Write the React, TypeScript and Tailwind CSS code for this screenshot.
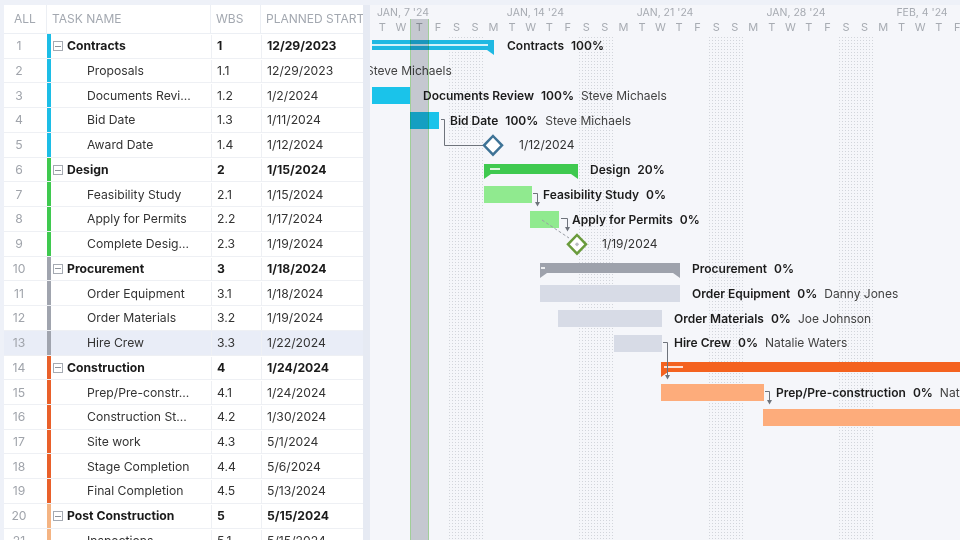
import React from 'react'

// page geometry, measured off the screenshot
const ROW_H = 24.74
const HEAD_H = 29
const G_LEFT = 370 // page x where the gantt pane starts
const G_TOP = 5
const COL0 = 373
const DAY = 18.55

const rowCenter = (i: number) => G_TOP + HEAD_H + ROW_H * (i - 0.5)

type Row = { n: number; name: string; wbs: string; start: string; group?: boolean; color: string }

const CYAN = '#1cbde6'
const GREEN = '#3fc94f'
const GREY = '#a0a4ae'
const ORANGE = '#e9602a'
const PEACH = '#f4b483'

const rows: Row[] = [
  { n: 1, name: 'Contracts', wbs: '1', start: '12/29/2023', group: true, color: CYAN },
  { n: 2, name: 'Proposals', wbs: '1.1', start: '12/29/2023', color: CYAN },
  { n: 3, name: 'Documents Revi...', wbs: '1.2', start: '1/2/2024', color: CYAN },
  { n: 4, name: 'Bid Date', wbs: '1.3', start: '1/11/2024', color: CYAN },
  { n: 5, name: 'Award Date', wbs: '1.4', start: '1/12/2024', color: CYAN },
  { n: 6, name: 'Design', wbs: '2', start: '1/15/2024', group: true, color: GREEN },
  { n: 7, name: 'Feasibility Study', wbs: '2.1', start: '1/15/2024', color: GREEN },
  { n: 8, name: 'Apply for Permits', wbs: '2.2', start: '1/17/2024', color: GREEN },
  { n: 9, name: 'Complete Desig...', wbs: '2.3', start: '1/19/2024', color: GREEN },
  { n: 10, name: 'Procurement', wbs: '3', start: '1/18/2024', group: true, color: GREY },
  { n: 11, name: 'Order Equipment', wbs: '3.1', start: '1/18/2024', color: GREY },
  { n: 12, name: 'Order Materials', wbs: '3.2', start: '1/19/2024', color: GREY },
  { n: 13, name: 'Hire Crew', wbs: '3.3', start: '1/22/2024', color: GREY },
  { n: 14, name: 'Construction', wbs: '4', start: '1/24/2024', group: true, color: ORANGE },
  { n: 15, name: 'Prep/Pre-constr...', wbs: '4.1', start: '1/24/2024', color: ORANGE },
  { n: 16, name: 'Construction St...', wbs: '4.2', start: '1/30/2024', color: ORANGE },
  { n: 17, name: 'Site work', wbs: '4.3', start: '5/1/2024', color: ORANGE },
  { n: 18, name: 'Stage Completion', wbs: '4.4', start: '5/6/2024', color: ORANGE },
  { n: 19, name: 'Final Completion', wbs: '4.5', start: '5/13/2024', color: ORANGE },
  { n: 20, name: 'Post Construction', wbs: '5', start: '5/15/2024', group: true, color: PEACH },
  { n: 21, name: 'Inspections', wbs: '5.1', start: '5/15/2024', color: PEACH },
]

const SELECTED = 13

const taskBars = [
  { row: 3, x1: 372, x2: 410, color: '#1ac3ea' },
  { row: 4, x1: 410, x2: 439, color: '#1ac3ea' },
  { row: 7, x1: 484, x2: 532, color: '#90ea8f' },
  { row: 8, x1: 530, x2: 559, color: '#90ea8f' },
  { row: 11, x1: 540, x2: 680, color: '#d7dbe6' },
  { row: 12, x1: 558, x2: 662, color: '#d7dbe6' },
  { row: 13, x1: 614, x2: 662, color: '#d7dbe6' },
  { row: 15, x1: 661, x2: 764, color: '#fdac7b' },
  { row: 16, x1: 763, x2: 970, color: '#fdac7b' },
]

const summaryBars = [
  { row: 1, x1: 372, x2: 494, color: '#1fb8e2', left: false, right: true, l1: 372, l2: 488 },
  { row: 6, x1: 484, x2: 578, color: GREEN, left: true, right: true, l1: 490, l2: 500 },
  { row: 10, x1: 540, x2: 680, color: '#9ea2ac', left: true, right: true, l1: 541, l2: 545 },
  { row: 14, x1: 661, x2: 970, color: '#f4621f', left: true, right: false, l1: 664, l2: 683 },
]

type Label = { row: number; x: number; name?: string; pct?: string; who?: string; plain?: string }

const labels: Label[] = [
  { row: 1, x: 507, name: 'Contracts', pct: '100%' },
  { row: 2, x: 366, who: 'Steve Michaels' },
  { row: 3, x: 423, name: 'Documents Review', pct: '100%', who: 'Steve Michaels' },
  { row: 4, x: 450, name: 'Bid Date', pct: '100%', who: 'Steve Michaels' },
  { row: 5, x: 519, plain: '1/12/2024' },
  { row: 6, x: 590, name: 'Design', pct: '20%' },
  { row: 7, x: 543, name: 'Feasibility Study', pct: '0%' },
  { row: 8, x: 572, name: 'Apply for Permits', pct: '0%' },
  { row: 9, x: 602, plain: '1/19/2024' },
  { row: 10, x: 692, name: 'Procurement', pct: '0%' },
  { row: 11, x: 692, name: 'Order Equipment', pct: '0%', who: 'Danny Jones' },
  { row: 12, x: 674, name: 'Order Materials', pct: '0%', who: 'Joe Johnson' },
  { row: 13, x: 674, name: 'Hire Crew', pct: '0%', who: 'Natalie Waters' },
  { row: 15, x: 776, name: 'Prep/Pre-construction', pct: '0%', who: 'Natalie Waters' },
]

const DAYS = ['T', 'W', 'T', 'F', 'S', 'S', 'M']
const MONTHS = ["JAN, 7 '24", "JAN, 14 '24", "JAN, 21 '24", "JAN, 28 '24", "FEB, 4 '24"]

function CollapseIcon() {
  return (
    <span className="w-[10px] h-[10px] border border-[#a5aab2] flex items-center justify-center shrink-0">
      <span className="w-[6px] h-px bg-[#8d939b]" />
    </span>
  )
}

function TaskTable() {
  return (
    <div className="w-[359px] shrink-0 bg-white flex flex-col overflow-hidden">
      <div className="h-[29px] shrink-0 flex items-center text-[12px] text-[#a3a8b0] border-b border-[#eceff4] whitespace-nowrap">
        <div className="w-[43px] h-full flex items-center pl-[10px] border-r border-[#eceff4]">ALL</div>
        <div className="w-[164px] h-full flex items-center pl-[5px] border-r border-[#eceff4]">TASK NAME</div>
        <div className="w-[50px] h-full flex items-center pl-[5px] border-r border-[#eceff4]">WBS</div>
        <div className="flex-1 h-full flex items-center pl-[5px] overflow-hidden">PLANNED START</div>
      </div>
      {rows.map((r) => (
        <div
          key={r.n}
          className={
            'h-[24.74px] shrink-0 flex items-stretch pt-px text-[12.2px] border-b border-[#eef0f4] whitespace-nowrap ' +
            (r.n === SELECTED ? 'bg-[#e9edf7]' : 'bg-white')
          }
        >
          <div className="w-[43px] pr-[13px] flex items-center justify-center text-[#a0a4ab]">{r.n}</div>
          <div className="w-[4px] -mt-px" style={{ backgroundColor: r.color }} />
          {r.group ? (
            <div className="w-[160px] flex items-center gap-[4px] pl-[2px] font-bold text-[#1a1a1a]">
              <CollapseIcon />
              <span>{r.name}</span>
            </div>
          ) : (
            <div className="w-[160px] flex items-center pl-[36px] text-[#333]">{r.name}</div>
          )}
          <div className={'w-[50px] flex items-center pl-[5px] border-l border-[#eef0f4] ' + (r.group ? 'font-bold text-[#1a1a1a]' : 'text-[#333]')}>
            {r.wbs}
          </div>
          <div className={'flex-1 flex items-center pl-[5px] border-l border-[#eef0f4] ' + (r.group ? 'font-bold text-[#1a1a1a]' : 'text-[#333]')}>
            {r.start}
          </div>
        </div>
      ))}
    </div>
  )
}

function Gantt() {
  const cols = Array.from({ length: 32 }, (_, i) => i)
  const todayX = COL0 + 2 * DAY
  return (
    <div className="relative flex-1 bg-[#f5f6fa] overflow-hidden">
      {/* weekend columns */}
      {cols
        .filter((i) => i % 7 === 4)
        .map((i) => (
          <div
            key={'we' + i}
            className="absolute bottom-0 bg-[linear-gradient(90deg,#f5f6fa_2px,transparent_2px),linear-gradient(#f5f6fa_2px,#d2d5db_2px)] bg-size-[3px_3px]"
            style={{ left: COL0 + i * DAY - G_LEFT, width: DAY * 2, top: HEAD_H + 1 }}
          />
        ))}

      {/* timescale */}
      <div className="absolute left-0 top-0 right-0 h-[29px] text-[#a7abb2] whitespace-nowrap">
        {MONTHS.map((m, i) => (
          <span
            key={m}
            className="absolute top-[1px] text-[10.5px] leading-[14px]"
            style={{ left: COL0 + i * 7 * DAY - G_LEFT + 4 }}
          >
            {m}
          </span>
        ))}
        {cols.map((i) => (
          <span
            key={'d' + i}
            className="absolute top-[15px] text-[11px] leading-[14px] text-center"
            style={{ left: COL0 + i * DAY - G_LEFT, width: DAY }}
          >
            {DAYS[i % 7]}
          </span>
        ))}
      </div>

      {/* task bars */}
      {taskBars.map((b) => (
        <div
          key={'tb' + b.row}
          className="absolute h-[17px]"
          style={{
            left: b.x1 - G_LEFT,
            width: b.x2 - b.x1,
            top: rowCenter(b.row) - 8.5 - G_TOP,
            backgroundColor: b.color,
          }}
        />
      ))}

      {/* summary bars */}
      {summaryBars.map((b) => {
        const w = b.x2 - b.x1
        return (
          <svg
            key={'sb' + b.row}
            className="absolute"
            width={w}
            height={16}
            style={{ left: b.x1 - G_LEFT, top: rowCenter(b.row) - 6 - G_TOP }}
          >
            <rect x={0} y={0} width={w} height={10} fill={b.color} />
            {b.left && <polygon points="0,10 7,10 0,15" fill={b.color} />}
            {b.right && <polygon points={`${w},10 ${w - 7},10 ${w},15`} fill={b.color} />}
            <rect x={b.l1 - b.x1} y={4.2} width={b.l2 - b.l1} height={1.6} fill="#ffffff" />
          </svg>
        )
      })}

      {/* links and milestones */}
      <svg
        className="absolute left-0 top-0"
        width={960 - G_LEFT}
        height={540 - G_TOP}
        viewBox={`${G_LEFT} ${G_TOP} ${960 - G_LEFT} ${540 - G_TOP}`}
      >
        <g stroke="#6e737b" strokeWidth={1} fill="none">
          <path d="M441 119.5 H444.5 V145.5 H485" />
          <path d="M533 193.5 H537.5 V203" />
          <path d="M561 218.5 H567.5 V228" />
          <path d="M663 342.5 H667.5 V376" />
          <path d="M765 391.5 H769.5 V401" />
        </g>
        <g fill="#6e737b">
          <polygon points="535,202 540,202 537.5,206.5" />
          <polygon points="565,227 570,227 567.5,231.5" />
          <polygon points="665,375 670,375 667.5,379.5" />
          <polygon points="767,400 772,400 769.5,404.5" />
        </g>
        <path d="M542 220 L569 238" stroke="#9a9ea5" strokeWidth={1} strokeDasharray="3 2" fill="none" />
        <polygon points="493,136 502,145.3 493,154.6 484,145.3" fill="#ffffff" stroke="#3e7396" strokeWidth={2.5} />
        <polygon points="577,235 586,244.3 577,253.6 568,244.3" fill="#ffffff" stroke="#6a9b3c" strokeWidth={2.5} />
        <rect x={575.5} y={242.8} width={3} height={3} fill="#b9bcc2" transform="rotate(45 577 244.3)" />
      </svg>

      {/* bar labels */}
      {labels.map((l) => (
        <div
          key={'lb' + l.row}
          className="absolute h-[18px] leading-[18px] text-[12px] whitespace-nowrap flex"
          style={{ left: l.x - G_LEFT, top: rowCenter(l.row) - 9 - G_TOP }}
        >
          {l.name && <span className="font-semibold text-[#1c1c1c]">{l.name}</span>}
          {l.pct && <span className="font-semibold text-[#1c1c1c] ml-[7px]">{l.pct}</span>}
          {l.who && <span className={'text-[#424242] ' + (l.name ? 'ml-[7px]' : '')}>{l.who}</span>}
          {l.plain && <span className="text-[#333]">{l.plain}</span>}
        </div>
      ))}

      {/* today marker */}
      <div
        className="absolute bottom-0 top-[14px] bg-[#cdd0d4] mix-blend-multiply border-x border-[#a8d69c] pointer-events-none"
        style={{ left: todayX - G_LEFT, width: DAY }}
      />
    </div>
  )
}

export default function App() {
  return (
    <div className="w-[960px] h-[540px] overflow-hidden bg-[#eef1f8] flex pl-[4px] pt-[5px] font-['Inter','Liberation_Sans',sans-serif]">
      <TaskTable />
      <div className="w-[7px] shrink-0 bg-[#e6eaf3]" />
      <Gantt />
    </div>
  )
}
